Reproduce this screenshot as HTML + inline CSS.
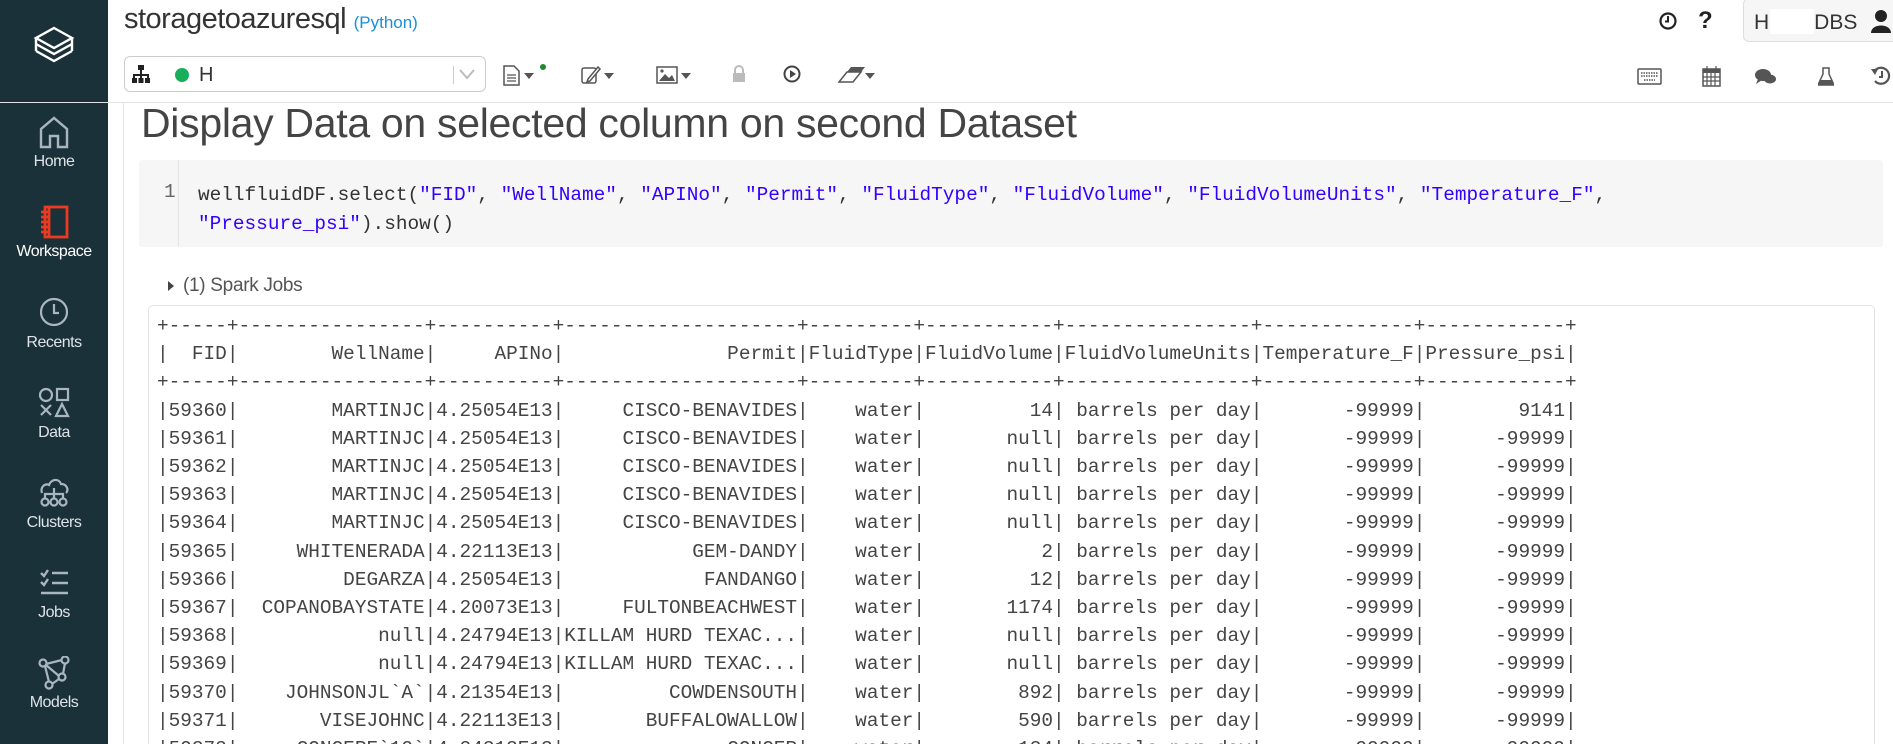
<!DOCTYPE html>
<html style="overflow:hidden;height:744px"><head><meta charset="utf-8">
<style>
*{margin:0;padding:0;box-sizing:border-box}
html,body{width:1893px;height:744px;overflow:hidden}
body{background:#fff;font-family:"Liberation Sans",sans-serif;position:relative}
#wrap{position:absolute;left:0;top:0;width:1893px;height:744px;overflow:hidden}
.sb{position:absolute;left:0;top:0;width:108px;height:744px;background:#1b3139}
.it{position:absolute;left:0;width:108px;text-align:center;color:#dde3e8;font-size:16px;letter-spacing:-0.5px}
.it svg{position:absolute;left:38px}
.ab{position:absolute}
.mono{font-family:"Liberation Mono",monospace;font-size:19.4px}
.s{color:#3300ff}
pre{font-family:"Liberation Mono",monospace;font-size:19.4px;line-height:28.2px;color:#444}
</style></head><body><div id="wrap">
<div class="sb">
  <svg class="ab" style="left:32px;top:24px" width="44" height="44" viewBox="0 0 44 44" fill="none" stroke="#fff" stroke-width="2.4"><path d="M22 4 L40 14 L22 24 L4 14 Z"/><path d="M4 20 L22 30 L40 20"/><path d="M4 27 L22 37 L40 27"/><path d="M4 14 V20 M40 14 V20 M4 20 V27 M40 20 V27"/></svg>
  <div class="it" style="top:115px;height:60px"><svg style="top:0" width="32" height="34" viewBox="0 0 32 34" fill="none" stroke="#a9b6c2" stroke-width="2.4"><path d="M3 14 L16 3 L29 14 V32 H20 V21 H12 V32 H3 Z"/></svg><div style="position:absolute;top:38px;width:108px">Home</div></div>
  <div class="it" style="top:205px;height:60px"><svg style="top:0" width="32" height="34" viewBox="0 0 32 34" fill="none" stroke="#ea3a21" stroke-width="2.8"><rect x="7" y="2" width="22" height="30"/><path d="M3 7h7M3 12h7M3 17h7M3 22h7M3 27h7M11 2v30"/></svg><div style="position:absolute;top:38px;width:108px;color:#fff">Workspace</div></div>
  <div class="it" style="top:296px;height:60px"><svg style="top:0" width="32" height="34" viewBox="0 0 32 34" fill="none" stroke="#a9b6c2" stroke-width="2.2"><circle cx="16" cy="16" r="13"/><path d="M16 8 V17 H21"/></svg><div style="position:absolute;top:38px;width:108px">Recents</div></div>
  <div class="it" style="top:386px;height:60px"><svg style="top:0" width="32" height="34" viewBox="0 0 32 34" fill="none" stroke="#a9b6c2" stroke-width="2.2"><circle cx="8" cy="9" r="6"/><rect x="19" y="3" width="11" height="11"/><path d="M3 19 L13 29 M13 19 L3 29 M24 18 L30 30 H18 Z"/></svg><div style="position:absolute;top:38px;width:108px">Data</div></div>
  <div class="it" style="top:476px;height:60px"><svg style="top:0" width="32" height="34" viewBox="0 0 32 34" fill="none" stroke="#a9b6c2" stroke-width="2.2"><path d="M4 17 C2 11 7 7 11 9 C13 3 21 2 23 8 C29 8 31 14 28 17"/><path d="M16 12 V22 M7 22 V18 H25 V22"/><circle cx="7" cy="26" r="3.5"/><circle cx="16" cy="26" r="3.5"/><circle cx="25" cy="26" r="3.5"/></svg><div style="position:absolute;top:38px;width:108px">Clusters</div></div>
  <div class="it" style="top:566px;height:60px"><svg style="top:0" width="32" height="34" viewBox="0 0 32 34" fill="none" stroke="#a9b6c2" stroke-width="2.4"><path d="M3 7 L6 10 L10 4 M3 16 L6 19 L10 13 M14 7 H30 M14 17 H30 M3 27 H30"/></svg><div style="position:absolute;top:38px;width:108px">Jobs</div></div>
  <div class="it" style="top:656px;height:60px"><svg style="top:0" width="32" height="34" viewBox="0 0 32 34" fill="none" stroke="#a9b6c2" stroke-width="2.2"><circle cx="5" cy="7" r="3.5"/><circle cx="27" cy="4" r="3.5"/><circle cx="24" cy="21" r="3.5"/><circle cx="11" cy="29" r="3.5"/><path d="M8 8 L24 4 M27 7 L25 18 M21 23 L14 28 M7 10 L11 26 M8 9 L21 20"/></svg><div style="position:absolute;top:38px;width:108px">Models</div></div>
</div>

<div class="ab" style="left:124px;top:3px;font-size:29px;color:#333;letter-spacing:-0.5px">storagetoazuresql <span style="font-size:17px;color:#1a8fd6;letter-spacing:0">(Python)</span></div>

<div class="ab" style="left:124px;top:56px;width:362px;height:36px;border:1px solid #ccc;border-radius:6px"></div>
<svg class="ab" style="left:131px;top:64px" width="20" height="20" viewBox="0 0 20 20" fill="#222"><rect x="7" y="1" width="6" height="5"/><rect x="1" y="14" width="5" height="5"/><rect x="7.5" y="14" width="5" height="5"/><rect x="14" y="14" width="5" height="5"/><path d="M9 6h2v4h7v4h-2v-2h-5v2h-2v-2H4v2H2v-4h7z"/></svg>
<div class="ab" style="left:175px;top:68px;width:14px;height:14px;border-radius:50%;background:#1aae5a"></div>
<div class="ab" style="left:199px;top:64px;font-size:20px;color:#333">H</div>
<div class="ab" style="left:453px;top:66px;width:1px;height:18px;background:#ccc"></div>
<svg class="ab" style="left:458px;top:68px" width="18" height="12"><path d="M2 2 L9 10 L16 2" fill="none" stroke="#bbb" stroke-width="2"/></svg>

<svg class="ab" style="left:502px;top:64px" width="46" height="22" viewBox="0 0 46 22"><path d="M2 2h10l5 5v14H2z" fill="none" stroke="#555" stroke-width="1.5"/><path d="M5 11h9M5 14h9M5 17h9" stroke="#555" stroke-width="1.3"/><path d="M22 9h10l-5 6z" fill="#555"/><circle cx="41" cy="3" r="3" fill="#1e8a2e"/></svg>
<svg class="ab" style="left:580px;top:64px" width="40" height="22" viewBox="0 0 40 22"><rect x="2" y="4" width="14" height="15" rx="2" fill="none" stroke="#555" stroke-width="1.5"/><path d="M8 15 L18 3 L20 5 L10 17 L7 18 Z" fill="#fff" stroke="#555" stroke-width="1.5"/><path d="M24 9h10l-5 6z" fill="#555"/></svg>
<svg class="ab" style="left:656px;top:64px" width="40" height="22" viewBox="0 0 40 22"><rect x="1" y="3" width="20" height="16" fill="none" stroke="#555" stroke-width="1.5"/><path d="M3 17 L9 10 L13 14 L16 11 L19 17Z" fill="#555"/><circle cx="6" cy="7" r="1.6" fill="#555"/><path d="M25 9h10l-5 6z" fill="#555"/></svg>
<svg class="ab" style="left:731px;top:64px" width="16" height="20" viewBox="0 0 16 20"><path d="M4 9V6a4 4 0 0 1 8 0v3" fill="none" stroke="#bbb" stroke-width="2"/><rect x="2" y="9" width="12" height="9" fill="#bbb"/></svg>
<svg class="ab" style="left:782px;top:64px" width="20" height="20" viewBox="0 0 20 20"><circle cx="10" cy="10" r="7.5" fill="none" stroke="#444" stroke-width="2"/><path d="M8 6 L14 10 L8 14Z" fill="#444"/></svg>
<svg class="ab" style="left:837px;top:64px" width="42" height="22" viewBox="0 0 42 22"><path d="M2 18 L10 8 H24 L16 18 Z" fill="none" stroke="#555" stroke-width="1.5"/><path d="M10 8 L14 3 H28 L24 8 Z" fill="#555"/><path d="M28 9h10l-5 6z" fill="#555"/></svg>

<svg class="ab" style="left:1658px;top:11px" width="20" height="20" viewBox="0 0 20 20"><circle cx="10" cy="10" r="7.5" fill="none" stroke="#222" stroke-width="2.2"/><path d="M10 5v5.5H7" fill="none" stroke="#222" stroke-width="2"/></svg>
<div class="ab" style="left:1698px;top:7px;font-size:24px;font-weight:bold;color:#222">?</div>
<div class="ab" style="left:1743px;top:-2px;width:155px;height:44px;border:1px solid #ddd;border-radius:6px;background:#f6f6f6"></div>
<div class="ab" style="left:1754px;top:9px;font-size:21px;color:#333">H<span style="display:inline-block;width:44px;height:25px;background:#fff;vertical-align:-5px;margin-left:1px"></span>DBS</div>
<svg class="ab" style="left:1871px;top:9px" width="22" height="24" viewBox="0 0 22 24" fill="#222"><circle cx="10" cy="7" r="6"/><path d="M0 24 C0 14 20 14 20 24Z"/></svg>

<svg class="ab" style="left:1637px;top:68px" width="25" height="17" viewBox="0 0 25 17"><rect x="1" y="1" width="23" height="15" rx="1" fill="none" stroke="#555" stroke-width="1.5"/><path d="M4 5h17M4 8h17M7 12h11" stroke="#555" stroke-width="1.5" stroke-dasharray="1.5 1"/></svg>
<svg class="ab" style="left:1702px;top:66px" width="19" height="21" viewBox="0 0 19 21"><rect x="1" y="3" width="17" height="17" fill="none" stroke="#555" stroke-width="1.5"/><rect x="1" y="3" width="17" height="4" fill="#555"/><path d="M1 11h17M1 15h17M5 7v13M9 7v13M13 7v13M5 0v5M14 0v5" stroke="#555" stroke-width="1.2"/></svg>
<svg class="ab" style="left:1755px;top:68px" width="22" height="18" viewBox="0 0 22 18" fill="#555"><ellipse cx="8" cy="7" rx="8" ry="6"/><path d="M3 11 L1 16 L7 12Z"/><ellipse cx="15" cy="11" rx="6" ry="4.5"/></svg>
<svg class="ab" style="left:1818px;top:66px" width="16" height="20" viewBox="0 0 16 20"><path d="M5 2h6v6l5 11H0L5 8z" fill="none" stroke="#555" stroke-width="1.5"/><path d="M2 14h12l2 5H0z" fill="#555"/></svg>
<svg class="ab" style="left:1870px;top:66px" width="22" height="20" viewBox="0 0 22 20"><path d="M4 6 A8 8 0 1 1 5 15" fill="none" stroke="#555" stroke-width="2.2"/><path d="M1 3 L5 9 L8 3Z" fill="#555"/><path d="M12 5v6h-3" fill="none" stroke="#555" stroke-width="2"/></svg>

<div class="ab" style="left:0;top:102px;width:1893px;height:1px;background:#e2e2e2"></div>
<div class="ab" style="left:123px;top:103px;width:1px;height:641px;background:#e6e6e6"></div>

<div class="ab" style="left:141px;top:100px;font-size:41px;color:#444;letter-spacing:-0.3px">Display Data on selected column on second Dataset</div>

<div class="ab" style="left:139px;top:160px;width:1744px;height:87px;background:#f6f6f6;border-radius:3px"></div>
<div class="ab" style="left:178px;top:160px;width:1px;height:87px;background:#e4e4e4"></div>
<div class="ab mono" style="left:164px;top:181px;color:#666">1</div>
<div class="ab mono" style="left:198px;top:181px;color:#333;line-height:29px">wellfluidDF.select(<span class="s">"FID"</span>, <span class="s">"WellName"</span>, <span class="s">"APINo"</span>, <span class="s">"Permit"</span>, <span class="s">"FluidType"</span>, <span class="s">"FluidVolume"</span>, <span class="s">"FluidVolumeUnits"</span>, <span class="s">"Temperature_F"</span>,<br><span class="s">"Pressure_psi"</span>).show()</div>

<svg class="ab" style="left:167px;top:280px" width="8" height="12"><path d="M1 1 L7 6 L1 11Z" fill="#444"/></svg>
<div class="ab" style="left:183px;top:275px;font-size:19px;color:#555;letter-spacing:-0.3px">(1) Spark Jobs</div>

<div class="ab" style="left:148px;top:305px;width:1727px;height:460px;border:1px solid #e3e3e3;border-radius:5px"></div>
<pre class="ab" style="left:157px;top:312px">+-----+----------------+----------+--------------------+---------+-----------+----------------+-------------+------------+
|  FID|        WellName|     APINo|              Permit|FluidType|FluidVolume|FluidVolumeUnits|Temperature_F|Pressure_psi|
+-----+----------------+----------+--------------------+---------+-----------+----------------+-------------+------------+
|59360|        MARTINJC|4.25054E13|     CISCO-BENAVIDES|    water|         14| barrels per day|       -99999|        9141|
|59361|        MARTINJC|4.25054E13|     CISCO-BENAVIDES|    water|       null| barrels per day|       -99999|      -99999|
|59362|        MARTINJC|4.25054E13|     CISCO-BENAVIDES|    water|       null| barrels per day|       -99999|      -99999|
|59363|        MARTINJC|4.25054E13|     CISCO-BENAVIDES|    water|       null| barrels per day|       -99999|      -99999|
|59364|        MARTINJC|4.25054E13|     CISCO-BENAVIDES|    water|       null| barrels per day|       -99999|      -99999|
|59365|     WHITENERADA|4.22113E13|           GEM-DANDY|    water|          2| barrels per day|       -99999|      -99999|
|59366|         DEGARZA|4.25054E13|            FANDANGO|    water|         12| barrels per day|       -99999|      -99999|
|59367|  COPANOBAYSTATE|4.20073E13|     FULTONBEACHWEST|    water|       1174| barrels per day|       -99999|      -99999|
|59368|            null|4.24794E13|KILLAM HURD TEXAC...|    water|       null| barrels per day|       -99999|      -99999|
|59369|            null|4.24794E13|KILLAM HURD TEXAC...|    water|       null| barrels per day|       -99999|      -99999|
|59370|    JOHNSONJL`A`|4.21354E13|         COWDENSOUTH|    water|        892| barrels per day|       -99999|      -99999|
|59371|       VISEJOHNC|4.22113E13|       BUFFALOWALLOW|    water|        590| barrels per day|       -99999|      -99999|
|59372|     CONGERE`10`|4.24313E13|              CONGER|    water|        134| barrels per day|       -99999|      -99999|</pre>
</div></body></html>
